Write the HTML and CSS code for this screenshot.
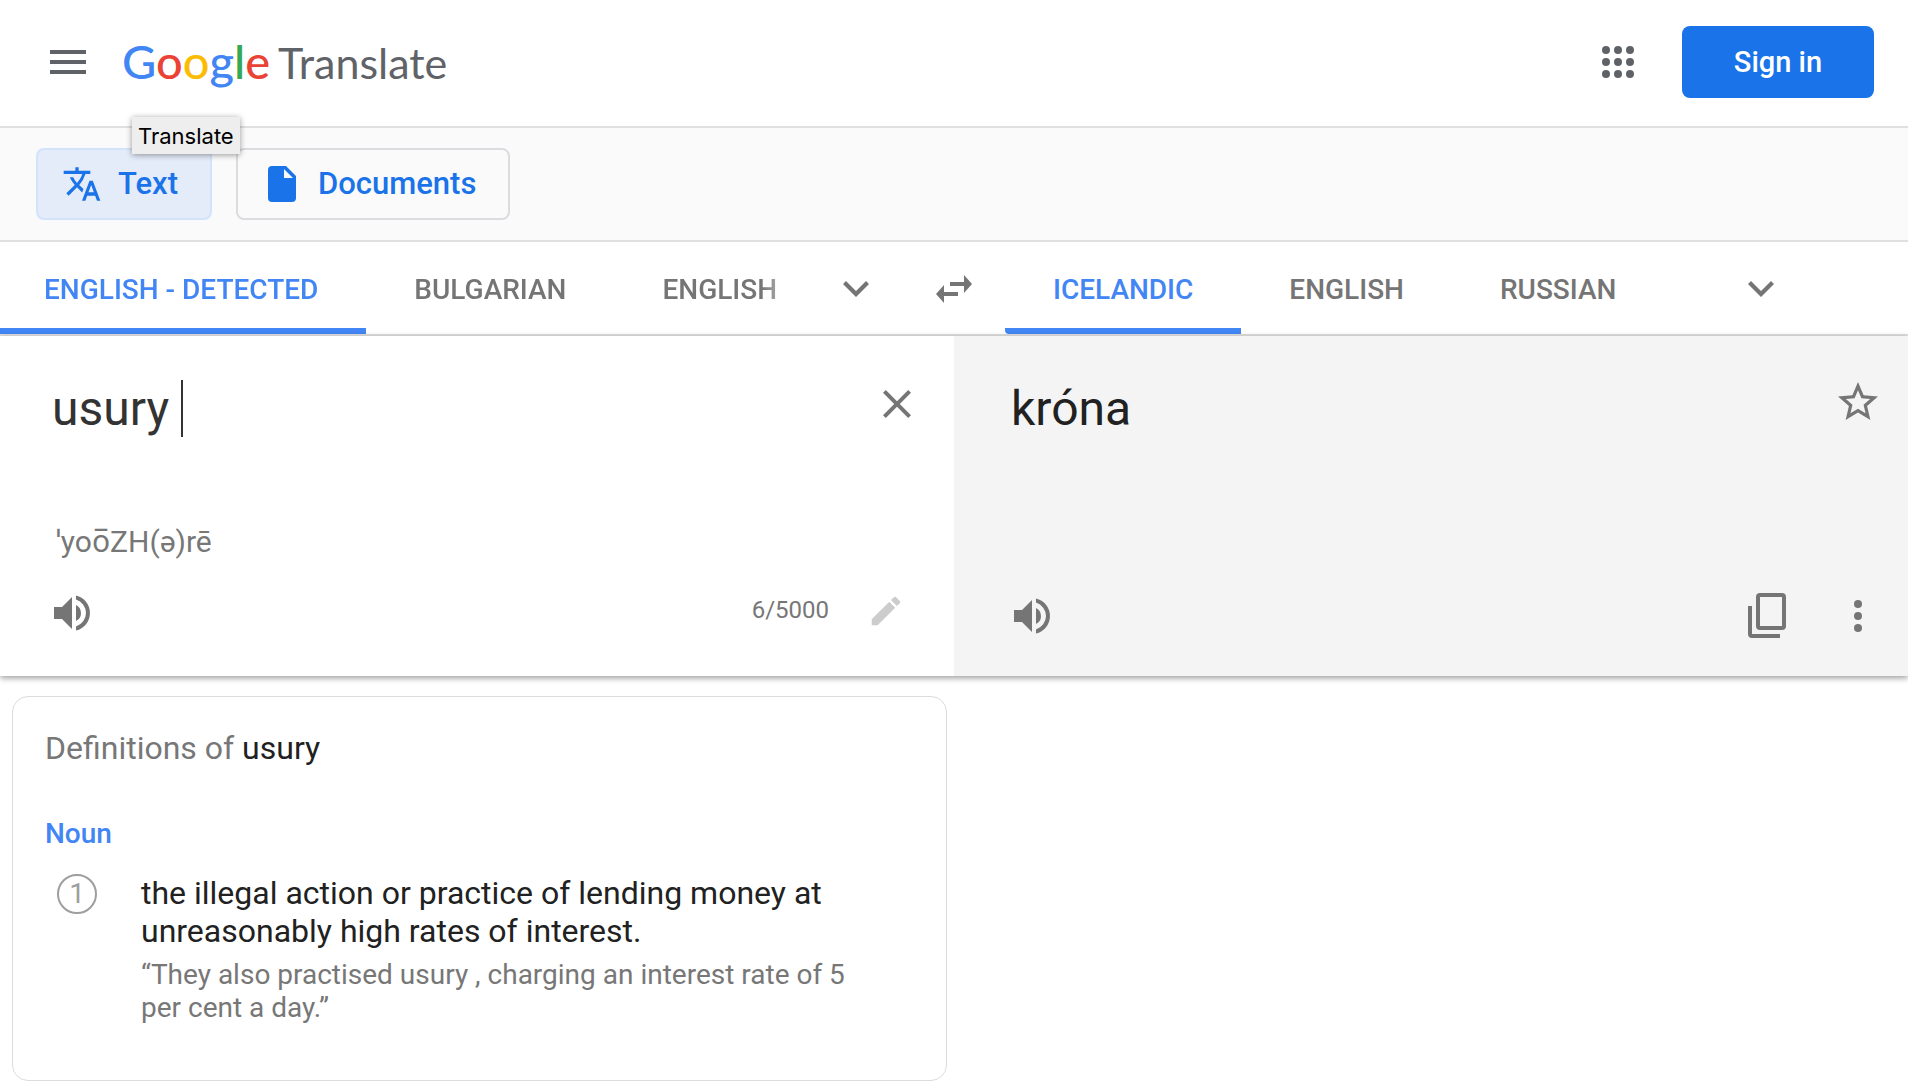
FILE: index.html
```html
<!DOCTYPE html>
<html lang="en">
<head>
    <meta charset="UTF-8">
    <meta name="viewport" content="width=device-width, initial-scale=1.0">
    <title>Google Translate</title>
    <link rel="stylesheet" href="styles.css">
</head>
<body>

    <header class="header">
        <button class="icon-button menu-button" type="button" aria-label="Main menu">
            <svg width="36" height="24" viewBox="0 0 36 24"><path d="M0 0h36v4H0zM0 10h36v4H0zM0 20h36v4H0z"/></svg>
        </button>
        <a class="logo" href="#">
            <span class="logo-google"><span class="blue">G</span><span class="red">o</span><span class="yellow">o</span><span class="blue">g</span><span class="green">l</span><span class="red">e</span></span>
            <span class="logo-product">Translate</span>
            <span class="tooltip" role="tooltip">Translate</span>
        </a>
        <button class="icon-button apps-button" type="button" aria-label="Google apps">
            <svg width="32" height="32" viewBox="0 0 32 32">
                <circle cx="4" cy="4" r="4"/><circle cx="16" cy="4" r="4"/><circle cx="28" cy="4" r="4"/>
                <circle cx="4" cy="16" r="4"/><circle cx="16" cy="16" r="4"/><circle cx="28" cy="16" r="4"/>
                <circle cx="4" cy="28" r="4"/><circle cx="16" cy="28" r="4"/><circle cx="28" cy="28" r="4"/>
            </svg>
        </button>
        <a class="sign-in" href="#">Sign in</a>
    </header>

    <nav class="modes">
        <button class="mode active" type="button">
            <svg width="40" height="40" viewBox="0 0 24 24"><path d="M12.87 15.07l-2.54-2.51.03-.03A17.52 17.52 0 0 0 14.07 6H17V4h-7V2H8v2H1v1.99h11.17C11.5 7.92 10.44 9.75 9 11.35 8.07 10.32 7.3 9.19 6.69 8h-2c.73 1.63 1.73 3.17 2.98 4.56l-5.09 5.02L4 19l5-5 3.11 3.11.76-2.04zM18.5 10h-2L12 22h2l1.12-3h4.75L21 22h2l-4.5-12zm-2.62 7l1.62-4.33L19.12 17h-3.24z"/></svg>
            <span>Text</span>
        </button>
        <button class="mode" type="button">
            <svg width="28" height="36" viewBox="0 0 28 36"><path d="M4 0h14l10 10v22a4 4 0 0 1-4 4H4a4 4 0 0 1-4-4V4a4 4 0 0 1 4-4zm12 3v9h9z" fill-rule="evenodd"/></svg>
            <span>Documents</span>
        </button>
    </nav>

    <main>
        <div class="languages">
            <div class="language-bar">
                <div class="tabs faded">
                    <button class="tab first active" type="button">ENGLISH - DETECTED</button>
                    <button class="tab" type="button">BULGARIAN</button>
                    <button class="tab" type="button">ENGLISH</button>
                </div>
                <button class="icon-button more-button" type="button" aria-label="More source languages">
                    <svg width="26" height="16" viewBox="0 0 26 16"><path d="M3 0l10 10L23 0l3 3-13 13L0 3z"/></svg>
                </button>
            </div>
            <button class="icon-button" type="button" aria-label="Swap languages">
                <svg width="36" height="28" viewBox="0 0 36 28"><path d="M14 7h14V0l8 9-8 9v-7H14zM22 17H8v-7l-8 9 8 9v-7h14z"/></svg>
            </button>
            <div class="language-bar target">
                <div class="tabs">
                    <button class="tab active" type="button">ICELANDIC</button>
                    <button class="tab" type="button">ENGLISH</button>
                    <button class="tab" type="button">RUSSIAN</button>
                </div>
                <button class="icon-button more-button" type="button" aria-label="More target languages">
                    <svg width="26" height="16" viewBox="0 0 26 16"><path d="M3 0l10 10L23 0l3 3-13 13L0 3z"/></svg>
                </button>
            </div>
        </div>

        <div class="panels">
            <section class="panel source">
                <div class="panel-top">
                    <div class="source-wrap">
                        <textarea class="source-text" aria-label="Source text" spellcheck="false">usury </textarea>
                        <span class="caret"></span>
                    </div>
                    <button class="icon-button" type="button" aria-label="Clear source text">
                        <svg width="48" height="48" viewBox="0 0 24 24"><path d="M19 6.41L17.59 5 12 10.59 6.41 5 5 6.41 10.59 12 5 17.59 6.41 19 12 13.41 17.59 19 19 17.59 13.41 12z"/></svg>
                    </button>
                </div>
                <div class="transliteration">ˈyoo̅ZH(ə)rē</div>
                <div class="panel-footer">
                    <button class="icon-button" type="button" aria-label="Listen to source">
                        <svg width="48" height="48" viewBox="0 0 24 24"><path d="M3 9v6h4l5 5V4L7 9H3zm11-1.030v8.060a4.500 4.500 0 0 0 0-8.060zM14 3.230v2.060a7.007 7.007 0 0 1 0 13.420v2.060a9.003 9.003 0 0 0 0-17.540z"/></svg>
                    </button>
                    <div class="count">6/5000</div>
                    <button class="icon-button pencil" type="button" aria-label="Handwriting">
                        <svg width="38" height="38" viewBox="0 0 24 24"><path d="M3 17.250V21h3.750L17.810 9.940l-3.750-3.750L3 17.250zM20.710 7.040a1 1 0 0 0 0-1.410l-2.340-2.340a1 1 0 0 0-1.410 0l-1.830 1.830 3.750 3.750 1.830-1.830z"/></svg>
                    </button>
                </div>
            </section>

            <section class="panel result">
                <div class="panel-top">
                    <div class="result-text">króna</div>
                    <button class="icon-button" type="button" aria-label="Save translation">
                        <svg width="48" height="46" viewBox="0 1 24 23"><path d="M22 9.240l-7.190-.620L12 2 9.190 8.630 2 9.240l5.460 4.730L5.820 21 12 17.270 18.180 21l-1.630-7.030L22 9.240zM12 15.400l-3.760 2.270 1-4.280-3.320-2.880 4.380-.380L12 6.100l1.710 4.040 4.380.380-3.320 2.880 1 4.280L12 15.400z"/></svg>
                    </button>
                </div>
                <div class="panel-footer">
                    <button class="icon-button" type="button" aria-label="Listen to translation">
                        <svg width="48" height="48" viewBox="0 0 24 24"><path d="M3 9v6h4l5 5V4L7 9H3zm11-1.030v8.060a4.500 4.500 0 0 0 0-8.060zM14 3.230v2.060a7.007 7.007 0 0 1 0 13.420v2.060a9.003 9.003 0 0 0 0-17.540z"/></svg>
                    </button>
                    <button class="icon-button copy" type="button" aria-label="Copy translation">
                        <svg width="38" height="46" viewBox="0 0 38 46"><path d="M12 0h22a4 4 0 0 1 4 4v29a4 4 0 0 1-4 4H12a4 4 0 0 1-4-4V4a4 4 0 0 1 4-4zm0 4v29h22V4zM0 13h4v28h28v4H4a4 4 0 0 1-4-4z" fill-rule="evenodd"/></svg>
                    </button>
                    <button class="icon-button" type="button" aria-label="More options">
                        <svg width="48" height="48" viewBox="0 0 24 24"><circle cx="12" cy="6" r="2"/><circle cx="12" cy="12" r="2"/><circle cx="12" cy="18" r="2"/></svg>
                    </button>
                </div>
            </section>
        </div>

        <section class="card">
            <h2>Definitions of <span>usury</span></h2>
            <h3>Noun</h3>
            <div class="definition">
                <div class="number">1</div>
                <div>
                    <p class="meaning">the illegal action or practice of lending money at unreasonably high rates of interest.</p>
                    <p class="example">“They also practised usury , charging an interest rate of 5 per cent a day.”</p>
                </div>
            </div>
        </section>
    </main>

</body>
</html>
```

FILE: styles.css
```css
* {
    box-sizing: border-box;
}
body {
    font-family: Roboto, "Noto Sans", Arial, sans-serif;
    color: #212121;
    background-color: #fff;
    margin: 0;
}
button {
    font: inherit;
    border: none;
    background: none;
    padding: 0;
    margin: 0;
    cursor: pointer;
}
a {
    text-decoration: none;
}
svg {
    display: block;
    fill: currentColor;
}
.icon-button {
    display: flex;
    align-items: center;
    justify-content: center;
    flex: none;
    color: #757575;
}

/* header */
.header {
    display: flex;
    align-items: center;
    height: 128px;
    padding: 0 34px 2px 50px;
    border-bottom: 2px solid #e0e0e0;
}
.menu-button, .apps-button {
    color: #5f6368;
}
.logo {
    position: relative;
    display: flex;
    align-items: baseline;
    gap: 8px;
    margin-left: 36px;
    font-family: Lato, Roboto, sans-serif;
    line-height: 56px;
}
.logo-google {
    font-size: 47px;
    font-weight: 500;
}
.logo-product {
    font-size: 43px;
    color: #5f6368;
}
.blue {
    color: #4285f4;
}
.red {
    color: #ea4335;
}
.yellow {
    color: #fbbc05;
}
.green {
    color: #34a853;
}
.tooltip {
    position: absolute;
    top: 84px;
    left: 10px;
    z-index: 1;
    padding: 1px 6px 0;
    font-family: Inter, Roboto, sans-serif;
    font-size: 22px;
    line-height: 36px;
    color: #000;
    background-color: #eee;
    box-shadow: 0 1px 6px rgba(0,0,0,0.4);
}
.apps-button {
    margin-left: auto;
    margin-right: 48px;
}
.sign-in {
    width: 192px;
    line-height: 72px;
    border-radius: 8px;
    font-size: 29px;
    font-weight: 500;
    text-align: center;
    color: #fff;
    background-color: #1a73e8;
}

/* text / documents */
.modes {
    display: flex;
    gap: 24px;
    padding: 20px 36px;
    background-color: #fafafa;
    border-bottom: 2px solid #e0e0e0;
}
.mode {
    display: flex;
    align-items: center;
    gap: 22px;
    height: 72px;
    padding: 0 32px 0 30px;
    border: 2px solid #dadce0;
    border-radius: 8px;
    font-size: 31px;
    font-weight: 500;
    color: #1a73e8;
}
.mode span {
    padding-bottom: 2px;
}
.mode.active {
    gap: 16px;
    padding: 0 32px 0 24px;
    border-color: #d2e3fc;
    background-color: #e4ebf9;
}

/* language bar */
.languages {
    display: grid;
    grid-template-columns: 1fr 102px 1fr;
    height: 94px;
    padding-top: 2px;
    border-bottom: 2px solid #e0e0e0;
}
.language-bar {
    display: flex;
    min-width: 0;
}
.language-bar.target {
    padding-right: 100px;
}
.tabs {
    display: flex;
    flex: 1;
    min-width: 0;
    overflow: hidden;
}
.faded {
    -webkit-mask-image: linear-gradient(to left, transparent, #000 48px);
    mask-image: linear-gradient(to left, transparent, #000 48px);
}
.tab {
    flex: none;
    padding: 6px 48px 0;
    border-bottom: 6px solid transparent;
    font-size: 28px;
    font-weight: 500;
    white-space: nowrap;
    color: #757575;
}
.tab.first {
    padding-left: 44px;
}
.tab.active {
    color: #4285f4;
    border-bottom-color: #4285f4;
}
.target .tab.active {
    border-bottom-left-radius: 4px;
}
.more-button {
    width: 94px;
}

/* panels */
.panels {
    display: grid;
    grid-template-columns: 1fr 1fr;
    position: relative;
    box-shadow: 0 2px 6px rgba(0,0,0,0.4);
}
.panel {
    display: flex;
    flex-direction: column;
    min-height: 340px;
    background-color: #fff;
}
.source {
    padding: 44px 33px 39px 48px;
}
.result {
    justify-content: space-between;
    padding: 44px 26px 36px 54px;
    background-color: #f4f4f4;
}
.panel-top {
    display: flex;
    align-items: flex-start;
    justify-content: space-between;
}
.source-wrap {
    position: relative;
    flex: 1;
}
.source-text {
    display: block;
    width: 100%;
    height: 144px;
    padding: 0 4px;
    border: none;
    outline: none;
    resize: none;
    font-family: inherit;
    font-size: 48px;
    line-height: 57px;
    color: #333;
    background: none;
}
.caret {
    position: absolute;
    top: 0;
    left: 133px;
    width: 2px;
    height: 57px;
    background-color: #333;
}
.result-text {
    padding-left: 3px;
    font-size: 48px;
    line-height: 57px;
}
.transliteration {
    padding-left: 8px;
    font-size: 30px;
    line-height: 36px;
    color: #777;
}
.panel-footer {
    display: flex;
    align-items: center;
}
.source .panel-footer {
    align-items: flex-start;
    margin-top: 29px;
}
.count {
    margin-left: auto;
    margin-right: 38px;
    font-size: 24px;
    line-height: 42px;
    color: #777;
}
.pencil {
    height: 44px;
    margin-right: 16px;
    color: #ccc;
}
.copy {
    margin-left: auto;
    margin-right: 48px;
}

/* definitions */
.card {
    width: 49%;
    margin: 20px 12px;
    padding: 32px 100px 56px 32px;
    border: 1px solid #dadce0;
    border-radius: 16px;
}
.card h2 {
    margin: 0;
    font-size: 32px;
    font-weight: 400;
    line-height: 38px;
    color: #777;
}
.card h2 span {
    color: #212121;
}
.card h3 {
    margin: 50px 0 23px;
    font-size: 28px;
    font-weight: 500;
    line-height: 34px;
    color: #4285f4;
}
.definition {
    display: grid;
    grid-template-columns: 40px 1fr;
    column-gap: 44px;
    padding-left: 12px;
}
.number {
    height: 40px;
    border: 2px solid #9e9e9e;
    border-radius: 50%;
    font-size: 28px;
    line-height: 36px;
    text-align: center;
    color: #9e9e9e;
}
.definition p {
    margin: 0;
}
.meaning {
    font-size: 32px;
    line-height: 38px;
}
.definition .example {
    margin-top: 8px;
    font-size: 28px;
    line-height: 33px;
    color: #777;
}
```
